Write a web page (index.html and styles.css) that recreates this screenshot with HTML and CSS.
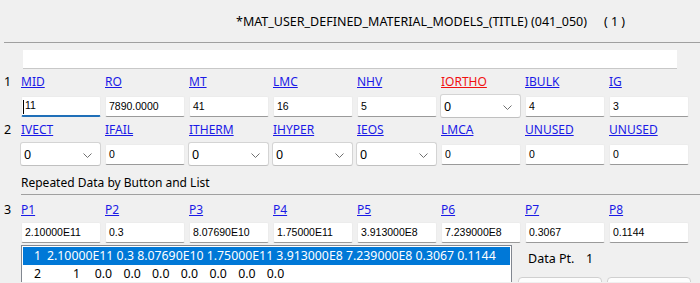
FILE: index.html
```html
<!DOCTYPE html>
<html>
<head>
<meta charset="utf-8">
<link rel="stylesheet" href="styles.css">
</head>
<body>
<div class="header">
  <span class="title">*MAT_USER_DEFINED_MATERIAL_MODELS_(TITLE) (041_050)</span><span class="count">( 1 )</span>
</div>
<div class="title-field"></div>

<div class="grid">
  <div class="num">1</div>
  <a class="lbl">MID</a><a class="lbl">RO</a><a class="lbl">MT</a><a class="lbl">LMC</a><a class="lbl">NHV</a><a class="lbl red">IORTHO</a><a class="lbl">IBULK</a><a class="lbl">IG</a>
  <div></div>
  <div class="cell"><div class="txt focus"><span class="caret"></span>11</div></div>
  <div class="cell"><div class="txt">7890.0000</div></div>
  <div class="cell"><div class="txt">41</div></div>
  <div class="cell"><div class="txt">16</div></div>
  <div class="cell"><div class="txt">5</div></div>
  <div class="cell"><div class="sel">0<svg class="chev" width="9" height="5" viewBox="0 0 9 5"><path d="M0.5 0.5 L4.5 4.5 L8.5 0.5" fill="none" stroke="#707070" stroke-width="1"/></svg></div></div>
  <div class="cell"><div class="txt">4</div></div>
  <div class="cell"><div class="txt">3</div></div>

  <div class="num">2</div>
  <a class="lbl">IVECT</a><a class="lbl">IFAIL</a><a class="lbl">ITHERM</a><a class="lbl">IHYPER</a><a class="lbl">IEOS</a><a class="lbl">LMCA</a><a class="lbl">UNUSED</a><a class="lbl">UNUSED</a>
  <div></div>
  <div class="cell"><div class="sel">0<svg class="chev" width="9" height="5" viewBox="0 0 9 5"><path d="M0.5 0.5 L4.5 4.5 L8.5 0.5" fill="none" stroke="#707070" stroke-width="1"/></svg></div></div>
  <div class="cell"><div class="txt">0</div></div>
  <div class="cell"><div class="sel">0<svg class="chev" width="9" height="5" viewBox="0 0 9 5"><path d="M0.5 0.5 L4.5 4.5 L8.5 0.5" fill="none" stroke="#707070" stroke-width="1"/></svg></div></div>
  <div class="cell"><div class="sel">0<svg class="chev" width="9" height="5" viewBox="0 0 9 5"><path d="M0.5 0.5 L4.5 4.5 L8.5 0.5" fill="none" stroke="#707070" stroke-width="1"/></svg></div></div>
  <div class="cell"><div class="sel">0<svg class="chev" width="9" height="5" viewBox="0 0 9 5"><path d="M0.5 0.5 L4.5 4.5 L8.5 0.5" fill="none" stroke="#707070" stroke-width="1"/></svg></div></div>
  <div class="cell"><div class="txt">0</div></div>
  <div class="cell"><div class="txt">0</div></div>
  <div class="cell"><div class="txt">0</div></div>
</div>

<div class="section">Repeated Data by Button and List</div>

<div class="grid grid3">
  <div class="num">3</div>
  <a class="lbl">P1</a><a class="lbl">P2</a><a class="lbl">P3</a><a class="lbl">P4</a><a class="lbl">P5</a><a class="lbl">P6</a><a class="lbl">P7</a><a class="lbl">P8</a>
  <div></div>
  <div class="cell"><div class="txt">2.10000E11</div></div>
  <div class="cell"><div class="txt">0.3</div></div>
  <div class="cell"><div class="txt">8.07690E10</div></div>
  <div class="cell"><div class="txt">1.75000E11</div></div>
  <div class="cell"><div class="txt">3.913000E8</div></div>
  <div class="cell"><div class="txt">7.239000E8</div></div>
  <div class="cell"><div class="txt">0.3067</div></div>
  <div class="cell"><div class="txt">0.1144</div></div>
</div>

<div class="bottom">
  <div class="listbox">
    <div class="item selected"><span class="idx">1</span><span class="vals">2.10000E11 0.3 8.07690E10 1.75000E11 3.913000E8 7.239000E8 0.3067 0.1144</span></div>
    <div class="item"><span class="idx">2</span><span class="first">1</span><span class="z">0.0</span><span class="z">0.0</span><span class="z">0.0</span><span class="z">0.0</span><span class="z">0.0</span><span class="z">0.0</span><span class="z">0.0</span></div>
  </div>
  <div class="side">
    <div class="datapt"><span class="dlabel">Data Pt.</span><span>1</span></div>
    <div class="buttons"><div class="btn"></div><div class="btn"></div></div>
  </div>
</div>
</body>
</html>
```
FILE: styles.css
```css
html, body {
  margin: 0;
  padding: 0;
  background: #f0f0f0;
  width: 700px;
  height: 283px;
  overflow: hidden;
  font-family: "Noto Sans", "Open Sans", sans-serif;
  color: #000;
}
.header {
  height: 28px;
  padding-top: 14px;
  margin-left: 4px;
  border-bottom: 1px solid #a0a0a0;
  font-size: 12.5px;
  line-height: 16px;
  padding-left: 232px;
  white-space: nowrap;
}
.count {
  margin-left: 17px;
}
.title-field {
  margin: 7px 0 5px 23px;
  width: 654px;
  height: 18px;
  background: #fff;
  border-bottom: 1px solid #c8c8c8;
}
.grid {
  display: grid;
  grid-template-columns: 13px repeat(8, 80px);
  grid-template-rows: 16px 24px 16px 24px;
  column-gap: 4px;
  row-gap: 4px;
  padding-left: 4px;
}
.grid3 {
  grid-template-rows: 16px 24px;
  row-gap: 2px;
  margin-top: 7px;
}
.num {
  font-size: 12.5px;
  line-height: 16px;
}
.lbl {
  font-size: 12px;
  line-height: 16px;
  color: #1a1ae6;
  text-decoration: underline;
  white-space: nowrap;
}
.lbl.red {
  color: #f01010;
}
.cell {
  display: flex;
  align-items: center;
}
.txt {
  position: relative;
  box-sizing: border-box;
  width: 80px;
  height: 21px;
  background: #fff;
  border: 1px solid #ececec;
  border-bottom: 1px solid #9a9a9a;
  border-radius: 2px;
  padding-left: 3px;
  font-family: "Liberation Sans", Arial, sans-serif;
  font-size: 10.5px;
  line-height: 18px;
}
.txt.focus {
  border-bottom: 2px solid #1f6fb8;
  line-height: 17px;
}
.caret {
  position: absolute;
  left: 1px;
  top: 3px;
  width: 1px;
  height: 14px;
  background: #000;
}
.sel {
  position: relative;
  box-sizing: border-box;
  width: 82px;
  height: 24px;
  margin-left: -1px;
  background: #fff;
  border: 1px solid #d4d4d4;
  border-bottom-color: #c0c0c0;
  border-radius: 3px;
  padding-left: 3px;
  font-size: 12.5px;
  line-height: 23px;
}
.chev {
  position: absolute;
  right: 8px;
  top: 10px;
}
.section {
  margin: 9px 0 0 21px;
  height: 16px;
  padding-bottom: 3px;
  border-bottom: 1px solid #a0a0a0;
  font-size: 12px;
  line-height: 16px;
}
.bottom {
  display: flex;
  margin-top: 1px;
  padding-left: 21px;
  height: 37px;
  overflow: hidden;
}
.listbox {
  box-sizing: border-box;
  width: 491px;
  height: 60px;
  background: #fff;
  border: 1px solid #828790;
  padding: 1px;
  font-size: 12.3px;
}
.item {
  height: 18px;
  line-height: 18px;
  white-space: pre;
}
.item.selected {
  background: #0078d7;
  color: #fff;
}
.idx {
  display: inline-block;
  margin-left: 11px;
  width: 13px;
}
.first {
  display: inline-block;
  width: 33px;
  text-align: right;
  margin-right: 14.7px;
}
.z {
  display: inline-block;
  width: 28.7px;
}
.side {
  margin-left: 6px;
  padding-top: 6px;
}
.datapt {
  padding-left: 10px;
  font-size: 12.5px;
  line-height: 16px;
}
.dlabel {
  display: inline-block;
  width: 58px;
}
.buttons {
  display: flex;
  gap: 5px;
  margin-top: 10px;
}
.btn {
  box-sizing: border-box;
  width: 84px;
  height: 24px;
  background: #fdfdfd;
  border: 1px solid #d0d0d0;
  border-radius: 4px;
}
```
